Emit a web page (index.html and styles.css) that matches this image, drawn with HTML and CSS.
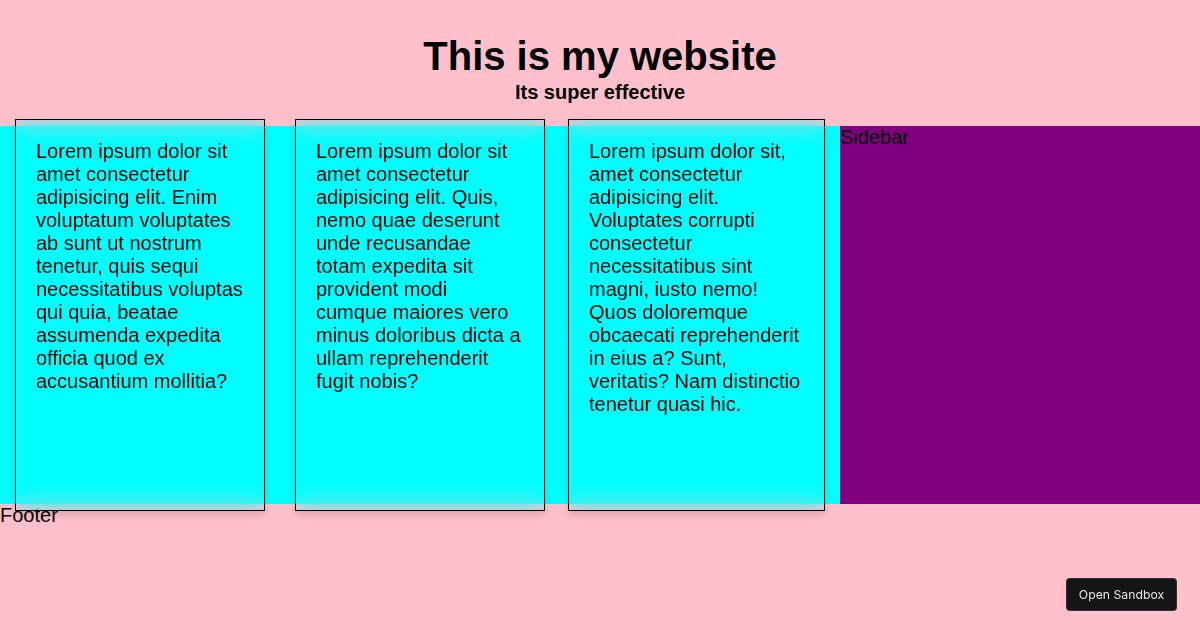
FILE: index.html
```html
<!DOCTYPE html>
<html lang="en">
<head>
<meta charset="utf-8">
<title>This is my website</title>
<link rel="stylesheet" href="styles.css">
</head>
<body>
  <header class="site-header">
    <h1 class="title">This is my website</h1>
    <h2 class="subtitle">Its super effective</h2>
  </header>
  <div class="layout">
    <main class="content">
      <div class="card card-1">Lorem ipsum dolor sit amet consectetur adipisicing elit. Enim voluptatum voluptates ab sunt ut nostrum tenetur, quis sequi necessitatibus voluptas qui quia, beatae assumenda expedita officia quod ex accusantium mollitia?</div>
      <div class="card card-2">Lorem ipsum dolor sit amet consectetur adipisicing elit. Quis, nemo quae deserunt unde recusandae totam expedita sit provident modi cumque maiores vero minus doloribus dicta a ullam reprehenderit fugit nobis?</div>
      <div class="card card-3">Lorem ipsum dolor sit, amet consectetur adipisicing elit. Voluptates corrupti consectetur necessitatibus sint magni, iusto nemo! Quos doloremque obcaecati reprehenderit in eius a? Sunt, veritatis? Nam distinctio tenetur quasi hic.</div>
    </main>
    <aside class="sidebar">Sidebar</aside>
  </div>
  <footer class="site-footer">Footer</footer>
  <button class="sandbox-btn" type="button">Open Sandbox</button>
</body>
</html>
```

FILE: styles.css
```css
* {
  box-sizing: border-box;
}

html, body {
  margin: 0;
  padding: 0;
}

body {
  background: #ffc0cb;
  font-family: "Liberation Sans", Arial, Helvetica, sans-serif;
  font-size: 20px;
  line-height: 23px;
  color: #000;
  height: 630px;
  overflow: hidden;
}

.site-header {
  text-align: center;
  padding: 33px 0 22px;
}

.title {
  margin: 0;
  font-size: 40px;
  font-weight: bold;
  line-height: 46px;
}

.subtitle {
  margin: 2px 0 0;
  font-size: 20px;
  font-weight: bold;
  line-height: 23px;
}

.layout {
  display: grid;
  grid-template-columns: 840px 360px;
  height: 378px;
}

.content {
  background: #00ffff;
  display: flex;
  align-items: stretch;
  padding: 0 15px;
}

.card {
  border: 1px solid #000;
  padding: 20px;
  margin: -7px 0 -7px;
  backdrop-filter: blur(10px);
  -webkit-backdrop-filter: blur(10px);
  box-shadow: 0 4px 8px rgba(0, 0, 0, 0.15);
}

.card-1 {
  width: 250px;
  margin-right: 30px;
}

.card-2 {
  width: 250px;
  margin-right: 23px;
  padding-right: 22px;
}

.card-3 {
  width: 257px;
}

.sidebar {
  background: #800080;
}

.sandbox-btn {
  position: fixed;
  right: 23px;
  bottom: 19px;
  width: 111px;
  height: 33px;
  padding: 0;
  background: #151515;
  color: #e6e6e6;
  border: 1px solid rgba(255, 255, 255, 0.12);
  border-radius: 4px;
  font-family: Inter, "Liberation Sans", sans-serif;
  font-size: 12.25px;
  line-height: normal;
  cursor: pointer;
}
```
